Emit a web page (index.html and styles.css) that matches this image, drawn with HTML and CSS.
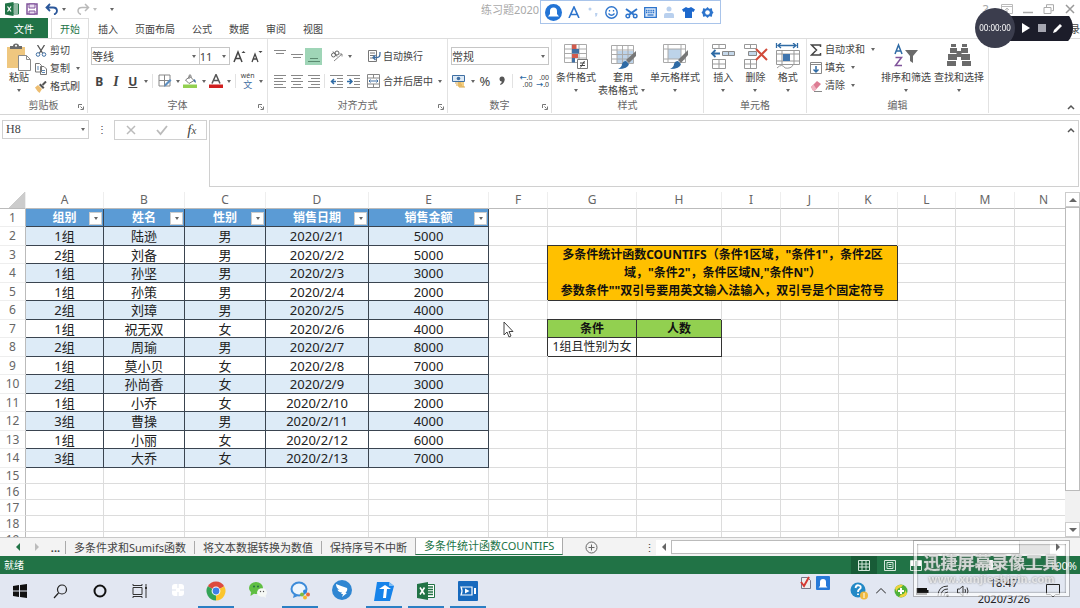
FILE: index.html
```html
<!DOCTYPE html>
<html lang="zh-CN">
<head>
    <meta charset="UTF-8">
    <meta name="viewport" content="width=device-width, initial-scale=1.0">
    <title>练习题2020 - Excel</title>
    <link rel="stylesheet" href="styles.css">
</head>
<body>
    <!-- Title bar -->
    <header class="titlebar">
        <div class="quick">
            <svg width="14" height="14" viewBox="0 0 14 14"><path d="M8 2h5.5v10H8z" fill="#fff" stroke="#217346"/><path d="M9 4h4M9 6h4M9 8h4M9 10h4" stroke="#217346"/><path d="M0 1.500 8.500 0v14L0 12.500z" fill="#217346"/><path d="m2.500 4.500 3.500 5M6 4.500l-3.500 5" stroke="#fff" stroke-width="1.300"/></svg>
            <button aria-label="保存"><svg width="12" height="12" viewBox="0 0 12 12"><path d="M1 1h10v10H1z" fill="#fff" stroke="#80539b" stroke-width="1.500"/><path d="M3 1h6v4H3zM3 8h6v3H3z" fill="#e9def0" stroke="#80539b"/></svg></button>
            <button aria-label="撤销"><svg width="14" height="12" viewBox="0 0 14 12"><path d="M5 1 1.500 4.500 5 8M2 4.500h6q4 0 4 3.500 0 2.500-3 3.500" fill="none" stroke="#2b579a" stroke-width="1.800"/></svg><i class="caret"></i></button>
            <button aria-label="恢复"><svg width="14" height="12" viewBox="0 0 14 12"><path d="m9 1 3.500 3.500L9 8M12 4.500H6Q2 4.500 2 8q0 2.500 3 3.500" fill="none" stroke="#b9b9b9" stroke-width="1.500"/></svg><i class="caret light"></i></button>
            <button aria-label="自定义"><i class="caret"></i></button>
        </div>
        <div class="doc-title">练习题2020</div>
        <div class="window-buttons">
            <button aria-label="帮助">?</button>
            <button aria-label="功能区选项"><svg width="12" height="10" viewBox="0 0 12 10"><path d="M.5.5h11v9H.5zM.5 2.500h11M6 8.500v-4M4 6l2-2 2 2" fill="none" stroke="#bbb"/></svg></button>
            <button aria-label="最小化"><svg width="12" height="10" viewBox="0 0 12 10"><path d="M1 8.500h10" stroke="#aaa" stroke-width="1.500"/></svg></button>
            <button aria-label="还原"><svg width="12" height="10" viewBox="0 0 12 10"><path d="M1 3.500h7v6H1zM3.500 3V.700h7v6H8.500" fill="none" stroke="#aaa"/></svg></button>
            <button aria-label="关闭"><svg width="12" height="10" viewBox="0 0 12 10"><path d="m2 1 8 8M10 1 2 9" stroke="#999" stroke-width="1.500"/></svg></button>
        </div>
    </header>

    <!-- Ribbon tabs -->
    <nav class="tabs">
        <a href="#" class="file">文件</a>
        <a href="#" class="active">开始</a>
        <a href="#">插入</a>
        <a href="#">页面布局</a>
        <a href="#">公式</a>
        <a href="#">数据</a>
        <a href="#">审阅</a>
        <a href="#">视图</a>
        <a href="#" class="login">登录</a>
    </nav>

    <!-- Ribbon -->
    <section class="ribbon">
        <div class="group clipboard">
            <div class="body">
                <button class="big"><svg width="26" height="28" viewBox="0 0 26 28"><path d="M1 4h18v21H1z" fill="#efc77f"/><path d="M4 6V3h3q0-2.500 3-2.500T13 3h3v3z" fill="#6b6b6b"/><circle cx="10" cy="2.700" r="1" fill="#fff"/><path d="M12.500 12.500h8l4 4v11h-12z" fill="#fff" stroke="#8a8a8a"/><path d="M20.500 12.500v4h4" fill="none" stroke="#8a8a8a"/></svg><span>粘贴</span><i class="caret"></i></button>
                <div class="list">
                    <button class="line"><svg width="12" height="12" viewBox="0 0 12 12"><path d="m2.500 0 5 8M9.500 0l-5 8" stroke="#555" stroke-width="1.300"/><circle cx="3" cy="9.500" r="1.800" fill="none" stroke="#3f6fa3"/><circle cx="9" cy="9.500" r="1.800" fill="none" stroke="#3f6fa3"/></svg>剪切</button>
                    <button class="line"><svg width="12" height="12" viewBox="0 0 12 12"><path d="M.5.500h4l2 2V9h-6zM5.500 3.500h3.500l2.500 2.500v5.500h-6z" fill="#fff" stroke="#777"/><path d="M2 4h2M2 6h2M7 7.500h3M7 9.500h3" stroke="#5b87b5"/></svg>复制<i class="caret"></i></button>
                    <button class="line"><svg width="12" height="12" viewBox="0 0 12 12"><path d="M0 6.500 3 4l4 4-2.500 4Q2 10 0 6.500z" fill="#edbd70"/><path d="m4 4 1.500-1.500 4 4L8 8z" fill="#555"/><path d="M7.500 4 11 .500" stroke="#555" stroke-width="2"/></svg>格式刷</button>
                </div>
            </div>
            <div class="label">剪贴板<svg class="launch" width="6" height="6" viewBox="0 0 6 6"><path d="M.5 4V.500H4M2.500 2.500l2 2M5.500 2.500v3h-3" fill="none" stroke="#777"/></svg></div>
        </div>

        <div class="group font">
            <div class="body rows">
                <div class="row">
                    <span class="picker name"><select aria-label="字体"><option>等线</option></select><i class="caret"></i></span>
                    <span class="picker size"><select aria-label="字号"><option>11</option></select><i class="caret"></i></span>
                    <button class="tool grow" aria-label="增大字号"><svg width="13" height="13" viewBox="0 0 13 13"><path d="M1 12 5 2l4 10M2.500 8.500h5" fill="none" stroke="#444" stroke-width="1.500"/><path d="m8.500 3 2-2 2 2z" fill="#444"/></svg></button>
                    <button class="tool" aria-label="减小字号"><svg width="13" height="13" viewBox="0 0 13 13"><path d="m2 12 3-8 3 8M3 9h4" fill="none" stroke="#444" stroke-width="1.300"/><path d="m8.500 1 2 2 2-2z" fill="#444"/></svg></button>
                </div>
                <div class="row">
                    <button class="tool bold">B</button>
                    <button class="tool italic">I</button>
                    <button class="tool underline">U</button><i class="caret"></i>
                    <i class="sep"></i>
                    <button class="tool" aria-label="边框"><svg width="14" height="14" viewBox="0 0 14 14"><path d="M1 1h11v11H1zM6.500 1v11M1 6.500h11" fill="none" stroke="#888"/><path d="m6 13 1-3 5-5 1.500 1.500-5 5z" fill="#5b8dc0"/></svg></button><i class="caret"></i>
                    <button class="tool" aria-label="填充颜色"><svg width="14" height="14" viewBox="0 0 14 14"><path d="M2.500 6 7 2.500l4 4L6 9.500z" fill="#fff" stroke="#777"/><path d="M6 5V1.500q1-1.500 2 0V4" fill="none" stroke="#777"/><path d="M11 5q2.500 1.500 1.500 4L10.500 7z" fill="#3f6fa3"/><path d="M0 10.500h14V14H0z" fill="#92d050"/></svg></button><i class="caret"></i>
                    <button class="tool" aria-label="字体颜色"><svg width="14" height="14" viewBox="0 0 14 14"><path d="m3 9.500 4-9 4 9M4.500 6.500h5" fill="none" stroke="#555" stroke-width="1.500"/><path d="M0 10.500h14V14H0z" fill="#d01f1f"/></svg></button><i class="caret"></i>
                    <i class="sep"></i>
                    <button class="tool wen"><small>wén</small><span>文</span></button><i class="caret"></i>
                </div>
            </div>
            <div class="label">字体<svg class="launch" width="6" height="6" viewBox="0 0 6 6"><path d="M.5 4V.500H4M2.500 2.500l2 2M5.500 2.500v3h-3" fill="none" stroke="#777"/></svg></div>
        </div>

        <div class="group align">
            <div class="body">
                <div class="rows">
                    <div class="row">
                        <button class="tool" aria-label="顶端对齐"><svg width="12" height="14" viewBox="0 0 12 14"><path d="M0 1.500h12M2 4.500h8" stroke="#888"/></svg></button>
                        <button class="tool" aria-label="垂直居中"><svg width="12" height="14" viewBox="0 0 12 14"><path d="M0 5.500h12M2 8.500h8" stroke="#888"/></svg></button>
                        <button class="tool on" aria-label="底端对齐"><svg width="12" height="14" viewBox="0 0 12 14"><path d="M2 9.500h8M0 12.500h12" stroke="#5b8a70"/></svg></button>
                        <i class="sep blank"></i>
                        <button class="tool" aria-label="方向"><svg width="14" height="14" viewBox="0 0 14 14"><circle cx="3.500" cy="6" r="2" fill="none" stroke="#666"/><path d="m3 2.500 4 5" stroke="#666"/><circle cx="7" cy="4" r="2" fill="none" stroke="#666"/><path d="m4 12 8-7M9.500 5H12v2.500" fill="none" stroke="#888"/></svg></button><i class="caret"></i>
                    </div>
                    <div class="row">
                        <button class="tool" aria-label="左对齐"><svg width="12" height="14" viewBox="0 0 12 14"><path d="M0 1.500h12M0 4.500h9M0 7.500h12M0 10.500h9M0 13.500h12" stroke="#888"/></svg></button>
                        <button class="tool" aria-label="居中"><svg width="12" height="14" viewBox="0 0 12 14"><path d="M0 1.500h12M2 4.500h8M0 7.500h12M2 10.500h8M0 13.500h12" stroke="#888"/></svg></button>
                        <button class="tool" aria-label="右对齐"><svg width="12" height="14" viewBox="0 0 12 14"><path d="M0 1.500h12M3 4.500h9M0 7.500h12M3 10.500h9M0 13.500h12" stroke="#888"/></svg></button>
                        <i class="sep"></i>
                        <button class="tool" aria-label="减少缩进"><svg width="13" height="14" viewBox="0 0 13 14"><path d="M0 1.500h13M7 4.500h6M7 7.500h6M7 10.500h6M0 13.500h13" stroke="#888"/><path d="M6 7.500H2M4 5 1.500 7.500 4 10" fill="none" stroke="#2f6ba5" stroke-width="1.500"/></svg></button>
                        <button class="tool" aria-label="增加缩进"><svg width="13" height="14" viewBox="0 0 13 14"><path d="M0 1.500h13M7 4.500h6M7 7.500h6M7 10.500h6M0 13.500h13" stroke="#888"/><path d="M0 7.500h4M2.500 5 5 7.500 2.500 10" fill="none" stroke="#2f6ba5" stroke-width="1.500"/></svg></button>
                    </div>
                </div>
                <div class="rows wrap">
                    <button class="line"><svg width="14" height="14" viewBox="0 0 14 14"><path d="M1.500 1.500h8v11h-8zM3 4h5M3 6.500h4M3 9h4" fill="none" stroke="#777"/><path d="M6 8.500h4q3 0 3-4V3M8.500 6 6 8.500 8.500 11" fill="none" stroke="#3f6fa3" stroke-width="1.300"/></svg>自动换行</button>
                    <button class="line"><svg width="14" height="14" viewBox="0 0 14 14"><path d="M.5.500h12v13H.5zM.5 4h12M.5 10h12M6.500.500V4M6.500 10v3.500" fill="none" stroke="#888"/><path d="M2 7h9M3.500 5.500 2 7l1.500 1.500M9.500 5.500 11 7 9.500 8.500" fill="none" stroke="#3f6fa3"/></svg>合并后居中<i class="caret"></i></button>
                </div>
            </div>
            <div class="label">对齐方式<svg class="launch" width="6" height="6" viewBox="0 0 6 6"><path d="M.5 4V.500H4M2.500 2.500l2 2M5.500 2.500v3h-3" fill="none" stroke="#777"/></svg></div>
        </div>

        <div class="group number">
            <div class="body rows">
                <div class="row">
                    <span class="picker format"><select aria-label="数字格式"><option>常规</option></select><i class="caret"></i></span>
                </div>
                <div class="row">
                    <button class="tool" aria-label="会计数字格式"><svg width="14" height="14" viewBox="0 0 14 14"><path d="M.5 1.500h12v6H.5z" fill="#dce9f5" stroke="#3f6fa3"/><circle cx="6.500" cy="4.500" r="1.800" fill="#3f6fa3"/><path d="M6 8h6v5H6z" fill="#f4cf83"/><path d="M3 9h6M4 11h6M7 13h6" stroke="#d8a64c"/></svg></button><i class="caret"></i>
                    <button class="tool percent">%</button>
                    <button class="tool comma" aria-label="千位分隔"><svg width="8" height="12" viewBox="0 0 8 12"><circle cx="4" cy="4" r="2.500" fill="#555"/><path d="M6.500 4q.5 4-4 6l-.5-1Q4 8 4 5z" fill="#555"/></svg></button>
                    <i class="sep"></i>
                    <button class="tool decimals"><span><b>←</b>.0</span><span>.00</span></button>
                    <button class="tool decimals"><span>.00</span><span><b>→</b>.0</span></button>
                </div>
            </div>
            <div class="label">数字<svg class="launch" width="6" height="6" viewBox="0 0 6 6"><path d="M.5 4V.500H4M2.500 2.500l2 2M5.500 2.500v3h-3" fill="none" stroke="#777"/></svg></div>
        </div>

        <div class="group style">
            <div class="body">
                <button class="big"><svg width="26" height="28" viewBox="0 0 26 28"><path d="M1.500 1.500h22v18h-22zM1.500 6h22M1.500 10.500h22M1.500 15h22M9 1.500v18M16 1.500v18" fill="none" stroke="#aaa"/><path d="M9 1.500h4.500V6H9zM9 11h6v4H9z" fill="#d15a4c"/><path d="M9 6h7v4.500H9zM9 15h3v4.500H9z" fill="#3f6fa3"/><path d="M14.500 16.500h10v9h-10z" fill="#fff" stroke="#777"/><path d="M17 20h5M17 22.500h5M21.500 18l-4 6.500" stroke="#444"/></svg><span>条件格式</span><i class="caret"></i></button>
                <button class="big"><svg width="26" height="28" viewBox="0 0 26 28"><path d="M7 8h16v12H7z" fill="#bdd3e9"/><path d="M1.500 2.500h22v18h-22zM1.500 7h22M1.500 11.500h22M1.500 16h22M7 2.500v18M12.500 2.500v18M18 2.500v18" fill="none" stroke="#aaa"/><path d="M26 8v5l-7 7-3-3z" fill="#777"/><path d="m16 18 3 3q-1 5-11 5 4-2 4-5 1-3 4-3z" fill="#2f6ba5"/></svg><span>套用</span><span class="with-caret">表格格式<i class="caret"></i></span></button>
                <button class="big"><svg width="26" height="28" viewBox="0 0 26 28"><path d="M6 6h13v10H6z" fill="#bdd3e9"/><path d="M1.500 1.500h22v18h-22zM1.500 6h22M1.500 16h22M6 1.500v18M19 1.500v18" fill="none" stroke="#aaa"/><path d="M26 7v5l-7 8-3-3z" fill="#777"/><path d="m16 18 3 3q-1 5-11 5 4-2 4-5 1-3 4-3z" fill="#2f6ba5"/></svg><span>单元格样式</span><i class="caret"></i></button>
            </div>
            <div class="label">样式</div>
        </div>

        <div class="group cells">
            <div class="body">
                <button class="big"><svg width="26" height="28" viewBox="0 0 26 28"><path d="M2.500 1.500h13v4h-13zM9 1.500v4M2.500 16.500h13v9h-13zM9 16.500v9M2.500 21h13" fill="none" stroke="#999"/><path d="M12.500 8.500h12v4h-12zM18.500 8.500v4" fill="#c5d8ea" stroke="#888"/><path d="M10 10.500H2M5.500 7 2 10.500 5.500 14" fill="none" stroke="#2f6ba5" stroke-width="1.800"/></svg><span>插入</span><i class="caret"></i></button>
                <button class="big"><svg width="26" height="28" viewBox="0 0 26 28"><path d="M2.500 1.500h12v4h-12zM8.500 1.500v4M2.500 16.500h12v9h-12zM8.500 16.500v9M2.500 21h12" fill="none" stroke="#999"/><path d="M6.500 8.500h8v4h-8z" fill="#c5d8ea" stroke="#888"/><path d="m14 6 11 11M25 6 14 17" stroke="#d14b3a" stroke-width="2"/></svg><span>删除</span><i class="caret"></i></button>
                <button class="big"><svg width="26" height="28" viewBox="0 0 26 28"><path d="M3 2.500h18M6 0 3 2.500 6 5M18 0l3 2.500L18 5M1.500 0v5M22.500 0v5" fill="none" stroke="#2f6ba5" stroke-width="1.300"/><path d="M1.500 7.500h23v14h-23zM1.500 11h23M1.500 18h23M7 7.500v14M19 7.500v14" fill="none" stroke="#999"/><path d="M8 11h7v7H8z" fill="#3f75ae"/><path d="M2 25q5-5 8 0 6 1 8-3" fill="none" stroke="#999"/></svg><span>格式</span><i class="caret"></i></button>
            </div>
            <div class="label">单元格</div>
        </div>

        <div class="group editing">
            <div class="body">
                <div class="list">
                    <button class="line"><svg width="12" height="12" viewBox="0 0 12 12"><path d="M10.500 3V1h-9l5 5-5 5h9V9" fill="none" stroke="#444" stroke-width="1.500"/></svg>自动求和<i class="caret"></i></button>
                    <button class="line"><svg width="12" height="12" viewBox="0 0 12 12"><path d="M.5.500h11v11H.5zM.5 2.500h11" fill="none" stroke="#888"/><path d="M6 4v6M3.500 7.500 6 10l2.500-2.500" fill="none" stroke="#2f6ba5" stroke-width="1.500"/></svg>填充<i class="caret"></i></button>
                    <button class="line"><svg width="12" height="12" viewBox="0 0 12 12"><path d="m1 7 6-6 4 3-6 6.500H3z" fill="#dd7c93"/><path d="M1 7 3 10.500h2L6.500 9 3.500 4.500z" fill="#f0b5c2"/><path d="M4 11.500h8" stroke="#888"/></svg>清除<i class="caret"></i></button>
                </div>
                <button class="big"><svg width="26" height="28" viewBox="0 0 26 28"><path d="M2 11 5.500 2 9 11M3 8h5" fill="none" stroke="#2f6ba5" stroke-width="1.500"/><path d="M2.500 14.500h6l-6 8h6.500" fill="none" stroke="#80539b" stroke-width="1.500"/><path d="M12 7h13l-5 6v7l-3-2v-5z" fill="#6b6b6b"/></svg><span>排序和筛选</span><i class="caret"></i></button>
                <button class="big"><svg width="26" height="28" viewBox="0 0 26 28"><path d="M5 1h5v3H5zM16 1h5v3h-5zM4 5h7v5H4zM15 5h7v5h-7zM10.500 8h5v6h-5zM2 11h9v6H2zM15 11h9v6h-9zM1 18h9v5H1zM16 18h9v5h-9z" fill="#6b6b6b"/></svg><span>查找和选择</span><i class="caret"></i></button>
            </div>
            <div class="label">编辑</div>
        </div>
        <button class="collapse" aria-label="折叠功能区"><svg width="8" height="6" viewBox="0 0 8 6"><path d="m1 5 3-3 3 3" fill="none" stroke="#555" stroke-width="1.500"/></svg></button>
    </section>

    <!-- Formula bar -->
    <section class="formula">
        <div class="namebox"><input type="text" value="H8" aria-label="名称框"><i class="caret"></i></div>
        <span class="dots">⋮</span>
        <div class="fx">
            <button aria-label="取消"><svg width="12" height="12" viewBox="0 0 12 12"><path d="m2 2 8 8M10 2l-8 8" stroke="#bbb" stroke-width="1.500"/></svg></button>
            <button aria-label="输入"><svg width="12" height="12" viewBox="0 0 12 12"><path d="m1 6 3.500 4L11 2" fill="none" stroke="#bbb" stroke-width="1.800"/></svg></button>
            <button class="fn">f<small>x</small></button>
        </div>
        <div class="editor">
            <textarea aria-label="编辑栏"></textarea>
            <button aria-label="折叠编辑栏"><svg width="8" height="6" viewBox="0 0 8 6"><path d="m1 5 3-3 3 3" fill="none" stroke="#555" stroke-width="1.500"/></svg></button>
        </div>
    </section>

    <!-- Worksheet -->
    <main class="sheet">
        <div class="grid">
            <table>
                <colgroup id="cols"></colgroup>
                <thead><tr id="letters"></tr></thead>
                <tbody id="cells"></tbody>
            </table>
            <svg class="cursor" width="11" height="17" viewBox="0 0 11 17"><path d="M1 1v13l3-3 2 5 2-1-2-4.500h4z" fill="#fff" stroke="#444"/></svg>
        </div>
        <div class="vscroll">
            <button aria-label="向上"><i class="arrow up"></i></button>
            <div class="thumb"></div>
            <button aria-label="向下"><i class="arrow down"></i></button>
        </div>
    </main>

    <!-- Sheet tabs -->
    <nav class="sheets">
        <div class="nav">
            <button aria-label="上一个"><i class="arrow left green"></i></button>
            <button aria-label="下一个"><i class="arrow right faint"></i></button>
            <button class="more">...</button>
        </div>
        <a href="#">多条件求和Sumifs函数</a>
        <a href="#">将文本数据转换为数值</a>
        <a href="#">保持序号不中断</a>
        <a href="#" class="active">多条件统计函数COUNTIFS</a>
        <button class="add" aria-label="新工作表"><svg width="13" height="13" viewBox="0 0 13 13"><circle cx="6.500" cy="6.500" r="5.500" fill="none" stroke="#666"/><path d="M6.500 3.500v6M3.500 6.500h6" stroke="#666"/></svg></button>
        <div class="hscroll">
            <span>⋮</span>
            <button aria-label="向左"><i class="arrow left"></i></button>
            <div class="track"><div class="thumb"></div></div>
            <button aria-label="向右"><i class="arrow right"></i></button>
        </div>
    </nav>

    <!-- Status bar -->
    <footer class="status">
        <span>就绪</span>
        <div class="views">
            <button class="on" aria-label="普通"><svg width="12" height="11" viewBox="0 0 12 11"><path d="M.5.500h11v10H.5zM.5 4h11M.5 7h11M4 .500v10M8 .500v10" fill="none" stroke="#d5e8dc"/></svg></button>
            <button aria-label="页面布局"><svg width="12" height="11" viewBox="0 0 12 11"><path d="M.5.500h11v10H.5zM3 2.500h6v6H3zM4.500 4.500h3M4.500 6.500h3" fill="none" stroke="#d5e8dc"/></svg></button>
            <button aria-label="分页预览"><svg width="12" height="11" viewBox="0 0 12 11"><path d="M.5.500h11v10H.5z" fill="none" stroke="#d5e8dc"/><path d="M1 1h4v5H1zM7 1h4v5H7z" fill="#fff"/></svg></button>
        </div>
        <input type="range" min="10" max="190" value="100" aria-label="缩放">
        <span class="zoom">100%</span>
    </footer>

    <!-- Taskbar -->
    <footer class="taskbar">
        <div class="system">
            <button aria-label="开始"><svg width="14" height="14" viewBox="0 0 14 14"><path d="m0 2 6-1v5.500H0zM7 .900 14 0v6.500H7zM0 7.500h6V13l-6-1zM7 7.500h7V14l-7-1z" fill="#111"/></svg></button>
            <button aria-label="搜索"><svg width="15" height="15" viewBox="0 0 15 15"><circle cx="9" cy="5.500" r="4.500" fill="none" stroke="#222" stroke-width="1.200"/><path d="M5.500 9 1 14" stroke="#222" stroke-width="1.200"/></svg></button>
            <button aria-label="Cortana"><svg width="14" height="14" viewBox="0 0 14 14"><circle cx="7" cy="7" r="5.500" fill="none" stroke="#111" stroke-width="2"/></svg></button>
            <button aria-label="任务视图"><svg width="16" height="14" viewBox="0 0 16 14"><path d="M1 3.500h9v7H1zM1 0v1.500h9V0M1 14v-1.500h9V14M14 0v3M14 6v8" fill="none" stroke="#333"/><path d="M13 3h2v2.500h-2z" fill="#333"/></svg></button>
        </div>
        <div class="apps">
            <button class="small" aria-label="工具"><svg width="14" height="14" viewBox="0 0 14 14"><rect x="1" y="1" width="12" height="12" rx="3" fill="#fff"/><path d="M7 1v4M7 9v4M1 7h4M9 7h4" stroke="#dde3ee"/></svg></button>
            <button class="open" aria-label="Chrome"><svg width="20" height="20" viewBox="0 0 20 20"><path d="M10 10 1.800 5.300A9.400 9.400 0 0 1 18.200 5.300z" fill="#dd4b3e"/><path d="M10 10 18.200 5.300A9.400 9.400 0 0 1 10 19.400z" fill="#fbc52d"/><path d="M10 10v9.400A9.400 9.400 0 0 1 1.800 5.300z" fill="#33a457"/><circle cx="10" cy="10" r="4.400" fill="#fff"/><circle cx="10" cy="10" r="3.400" fill="#3f80e8"/></svg></button>
            <button aria-label="微信"><svg width="20" height="18" viewBox="0 0 20 18"><ellipse cx="8" cy="7" rx="7" ry="6" fill="#5fbe43"/><path d="m3 11-.5 4L7 12z" fill="#5fbe43"/><ellipse cx="14" cy="11.500" rx="5" ry="4.300" fill="#f5f8f5"/><path d="m15 15 3 2-.5-3z" fill="#f5f8f5"/><circle cx="6" cy="5.500" r=".9" fill="#264"/><circle cx="10" cy="5.500" r=".9" fill="#264"/><circle cx="12.500" cy="10.500" r=".7" fill="#555"/><circle cx="15.500" cy="10.500" r=".7" fill="#555"/></svg></button>
            <button class="open" aria-label="企业微信"><svg width="20" height="20" viewBox="0 0 20 20"><ellipse cx="9" cy="8" rx="7.500" ry="6.500" fill="#edf5fd" stroke="#3c8bd9" stroke-width="2"/><path d="m4 13-1 4 5-2z" fill="#3c8bd9"/><circle cx="15" cy="10.500" r="2" fill="#2f88dc"/><circle cx="18" cy="13.500" r="2" fill="#e8683c"/><circle cx="15" cy="16.500" r="2" fill="#f3b72e"/><circle cx="12" cy="13.500" r="2" fill="#7dbb42"/></svg></button>
            <button aria-label="钉钉"><svg width="20" height="20" viewBox="0 0 20 20"><circle cx="10" cy="10" r="10" fill="#2f86d2"/><path d="M4 4q5 2 11 4 1 2-1.500 5H15l-5 4 1-3H9l1-1.500Q6 12 5.500 9.500l2 .3Q4 8 4 4z" fill="#fff"/></svg></button>
            <button class="open" aria-label="腾讯文档"><svg width="20" height="19" viewBox="0 0 20 19"><path d="M3 0h12l5 4-4 15H0z" fill="#1683ea"/><path d="M15 0v4h5z" fill="#7dbcf5"/><path d="m5 7 6-4 6 4h-4l-1 9H9l1-9z" fill="#fff"/></svg></button>
            <button class="open" aria-label="Excel"><svg width="18" height="18" viewBox="0 0 18 18"><path d="M9 2.500h8.500v13H9z" fill="#fff" stroke="#217346"/><path d="M11 5h5M11 7.500h5M11 10h5M11 12.500h5" stroke="#217346" stroke-width="1.500"/><path d="M0 2 11 0v18L0 16z" fill="#217346"/><path d="m3 5.500 4.500 7M7.500 5.500l-4.500 7" stroke="#fff" stroke-width="1.600"/></svg></button>
            <button class="open" aria-label="录像工具"><svg width="20" height="20" viewBox="0 0 20 20"><rect width="20" height="20" rx="1" fill="#1769bd"/><path d="M3 6h11v8H3q2-4 0-8z" fill="#1769bd" stroke="#fff" stroke-width="1.200"/><path d="m7 7.500 4.500 2.500L7 12.500z" fill="#fff"/><path d="M16 7h2v6h-2z" fill="#fff"/></svg></button>
        </div>
        <div class="float-icons">
            <svg width="13" height="14" viewBox="0 0 13 14"><path d="M2.500 1.500h6l3 3v8h-9z" fill="#eee" stroke="#778"/><path d="m2 6 3 4 5-9" fill="none" stroke="#d53a33" stroke-width="2"/></svg>
            <svg width="14" height="14" viewBox="0 0 14 14"><rect width="14" height="14" rx="1" fill="#2779d8"/><path d="M4 10V6q0-3 3-3t3 3v4l1.500 1.500H2.500z" fill="#fff"/></svg>
        </div>
        <div class="tray">
            <svg width="18" height="18" viewBox="0 0 18 18"><circle cx="8" cy="8" r="7.500" fill="#2389c6"/><path d="M5.500 6q.5-3 3-2.700 3 .5 2 3Q8 8 8 10M8 11.500V13" fill="none" stroke="#fff" stroke-width="1.800"/><circle cx="14" cy="13.500" r="4" fill="#eeb941"/><path d="M14 11v5" stroke="#fff"/></svg>
            <svg width="10" height="6" viewBox="0 0 10 6"><path d="m0 5.500 5-5 5 5" fill="none" stroke="#222"/></svg>
            <svg width="14" height="14" viewBox="0 0 14 14"><circle cx="7" cy="7" r="6.500" fill="#4fb13a"/><path d="M1 4q3-4 8-3L7 3.500Q3 3.500 2.500 8zM13 10q-3 4-8 3l2-2.500q4 0 4.500-4.500z" fill="#f0d33c"/><path d="M7 4v6M4 7h6" stroke="#fff" stroke-width="2"/></svg>
            <svg width="13" height="7" viewBox="0 0 13 7"><path d="M0 0h11v7H0zM11 2h1.500v3H11z" fill="#111"/></svg>
            <svg width="12" height="12" viewBox="0 0 12 12"><path d="M1 11q0-10 10-10M4 11q0-7 7-7M7 11q0-4 4-4" fill="none" stroke="#333"/><circle cx="10.500" cy="10.500" r="1.200" fill="#333"/></svg>
            <svg width="13" height="12" viewBox="0 0 13 12"><path d="M.5 4h2L6 1v10L2.500 8h-2zM8 4q1 2 0 4M10 2.500q2 3.500 0 7" fill="none" stroke="#333"/></svg>
            <div class="clock"><span>18:47</span><span>2020/3/26</span></div>
            <svg width="14" height="14" viewBox="0 0 14 14"><path d="M.5.500h13v10h-4L7 13l-2.500-2.500h-4z" fill="none" stroke="#222"/></svg>
        </div>
    </footer>

    <!-- Input method bar -->
    <div class="ime">
        <svg width="17" height="17" viewBox="0 0 17 17"><circle cx="8.500" cy="8.500" r="8.500" fill="#2274d6"/><path d="M5 10V7q0-3.500 3.500-3.500T12 7v3l2 2.500H3z" fill="#fff"/></svg>
        <svg width="12" height="12" viewBox="0 0 12 12"><path d="M1 12 6 1l5 11M3 8.500h6" fill="none" stroke="#2d74cc" stroke-width="1.600"/></svg>
        <svg width="12" height="12" viewBox="0 0 12 12"><circle cx="3" cy="3" r="1.500" fill="#b9d0ee"/><path d="M8 7h2.500q0 3-2 4z" fill="#b9d0ee"/></svg>
        <svg width="13" height="13" viewBox="0 0 13 13"><circle cx="6.500" cy="6.500" r="5.700" fill="none" stroke="#2d74cc" stroke-width="1.400"/><path d="M4.500 4v1.500M8.500 4v1.500M3.500 7.500q3 3.500 6 0" fill="none" stroke="#2d74cc" stroke-width="1.300"/></svg>
        <svg width="13" height="13" viewBox="0 0 13 13"><path d="m1 3 9 6.500M12 3 3 9.500" stroke="#2d74cc" stroke-width="2"/><circle cx="2.800" cy="10" r="1.800" fill="#fff" stroke="#2d74cc" stroke-width="1.400"/><circle cx="10.200" cy="10" r="1.800" fill="#fff" stroke="#2d74cc" stroke-width="1.400"/></svg>
        <svg width="13" height="11" viewBox="0 0 13 11"><path d="M.7.700h11.600v9.600H.7z" fill="#dbe8f8" stroke="#2d74cc" stroke-width="1.300"/><path d="M2 3.500h9M2 5.500h9" stroke="#2d74cc" stroke-width="1.300" stroke-dasharray="1.400 .8"/><path d="M3.500 8h6" stroke="#2d74cc" stroke-width="1.300"/></svg>
        <svg width="12" height="12" viewBox="0 0 12 12"><circle cx="6" cy="3" r="2.500" fill="#b9d0ee"/><path d="M1 12V9q0-2 2-2h6q2 0 2 2v3z" fill="#b9d0ee"/></svg>
        <svg width="13" height="12" viewBox="0 0 13 12"><path d="M4 1q2.500 2 5 0l4 2.500L11.500 6 10 5.500V12H3V5.500L1.500 6 0 3.500z" fill="#1d68cc"/></svg>
        <svg width="13" height="13" viewBox="0 0 13 13"><path d="m6.500 1 1.700 1.800 2.700-.5.4 2.600L12.500 6.500l-1.200 1.600-.4 2.600-2.700-.5L6.500 12l-1.700-1.800-2.700.5-.4-2.600L.5 6.500l1.200-1.600.4-2.600 2.700.5z" fill="#2d74cc"/><circle cx="6.500" cy="6.500" r="2.300" fill="#fff"/></svg>
    </div>

    <!-- Screen recorder widget -->
    <div class="recorder">
        <span class="time">00:00:00</span>
        <button aria-label="播放"><svg width="10" height="10" viewBox="0 0 10 10"><path d="m1 0 8 5-8 5z" fill="#fff"/></svg></button>
        <button aria-label="停止"><svg width="10" height="10" viewBox="0 0 10 10"><path d="M1 1h8v8H1z" fill="#a5a6b0"/></svg></button>
        <button aria-label="画笔"><svg width="10" height="10" viewBox="0 0 10 10"><path d="m0 10 1-3 6-6 2 2-6 6z" fill="#fff"/></svg></button>
    </div>

    <div class="watermark">
        <strong>迅捷屏幕录像工具</strong>
        <span>www.xunjieshipin.com</span>
    </div>

    <script>
        const columns = [
            ['A', 'w78'], ['B', 'w81'], ['C', 'w81'], ['D', 'w103'], ['E', 'w120'], ['F', 'w59'], ['G', 'w89'],
            ['H', 'w85'], ['I', 'w59'], ['J', 'w58'], ['K', 'w59'], ['L', 'w58'], ['M', 'w59'], ['N', 'w58']
        ];
        const headers = ['组别', '姓名', '性别', '销售日期', '销售金额'];
        const sales = [
            ['1组', '陆逊', '男', '2020/2/1', 5000],
            ['2组', '刘备', '男', '2020/2/2', 5000],
            ['1组', '孙坚', '男', '2020/2/3', 3000],
            ['1组', '孙策', '男', '2020/2/4', 2000],
            ['2组', '刘璋', '男', '2020/2/5', 4000],
            ['1组', '祝无双', '女', '2020/2/6', 4000],
            ['2组', '周瑜', '男', '2020/2/7', 8000],
            ['1组', '莫小贝', '女', '2020/2/8', 7000],
            ['2组', '孙尚香', '女', '2020/2/9', 3000],
            ['1组', '小乔', '女', '2020/2/10', 2000],
            ['3组', '曹操', '男', '2020/2/11', 4000],
            ['1组', '小丽', '女', '2020/2/12', 6000],
            ['3组', '大乔', '女', '2020/2/13', 7000]
        ];
        const note = '多条件统计函数COUNTIFS（条件1区域，"条件1"，条件2区<br>域，"条件2"，条件区域N,"条件N"）<br>参数条件""双引号要用英文输入法输入，双引号是个固定符号';

        // Cells outside the sales table, keyed by address
        const extra = {
            G3: `<td class="note" colspan="5" rowspan="3">${note}</td>`,
            G7: '<td class="key">条件</td>',
            H7: '<td class="key">人数</td>',
            G8: '<td class="boxed">1组且性别为女</td>',
            H8: '<td class="boxed"></td>'
        };
        const merged = ['H3', 'I3', 'J3', 'K3', 'G4', 'H4', 'I4', 'J4', 'K4', 'G5', 'H5', 'I5', 'J5', 'K5'];

        document.getElementById('cols').innerHTML = '<col class="w26">' + columns.map(c => `<col class="${c[1]}">`).join('');
        document.getElementById('letters').innerHTML = '<th class="corner"></th>' + columns.map(c => `<th>${c[0]}</th>`).join('');

        let html = '';
        for (let r = 1; r <= 19; r++) {
            html += `<tr class="${r > 14 ? 'short' : ''}"><th>${r}</th>`;
            columns.forEach((c, i) => {
                const address = c[0] + r;
                if (merged.includes(address)) return;
                if (i < 5 && r === 1) {
                    html += `<td class="head">${headers[i]}<button class="filter" aria-label="筛选"><i class="caret"></i></button></td>`;
                } else if (i < 5 && r <= 14) {
                    html += `<td class="data ${r % 2 === 0 ? 'band' : ''}">${sales[r - 2][i]}</td>`;
                } else {
                    html += extra[address] || '<td></td>';
                }
            });
            html += '</tr>';
        }
        document.getElementById('cells').innerHTML = html;
    </script>
</body>
</html>
```
FILE: styles.css
```css
* {
    box-sizing: border-box;
}
body {
    margin: 0;
    height: 100vh;
    display: flex;
    flex-direction: column;
    overflow: hidden;
    background-color: #fff;
    color: #444;
    font-family: "Noto Sans", "Noto Sans CJK SC", sans-serif;
    font-size: 10px;
    line-height: 13px;
}
button, input, select, textarea {
    font: inherit;
    color: inherit;
    background: none;
    border: none;
    padding: 0;
    margin: 0;
}
button {
    display: flex;
    align-items: center;
    justify-content: center;
}
a {
    color: inherit;
    text-decoration: none;
}
svg {
    display: block;
    flex: none;
}
.caret {
    display: inline-block;
    flex: none;
    margin: 0 3px;
    border: 2px solid transparent;
    border-top: 3px solid #666;
    border-bottom: none;
}
.caret.light {
    border-top-color: #bbb;
}
.arrow {
    border: 4px solid transparent;
}
.arrow.up {
    border-top: none;
    border-bottom-color: #666;
}
.arrow.down {
    border-bottom: none;
    border-top-color: #666;
}
.arrow.left {
    border-left: none;
    border-right-color: #666;
}
.arrow.right {
    border-right: none;
    border-left-color: #666;
}
.arrow.green {
    border-right-color: #217346;
}
.arrow.faint {
    border-left-color: #bbb;
}

/* title bar */
.titlebar {
    flex: none;
    height: 18px;
    display: grid;
    grid-template-columns: 1fr auto 1fr;
    align-items: center;
}
.quick {
    display: flex;
    align-items: center;
    gap: 7px;
    padding-left: 5px;
}
.doc-title {
    font-size: 11px;
    color: #aaa;
    padding-right: 60px;
}
.window-buttons {
    display: flex;
    justify-content: flex-end;
}
.window-buttons button {
    width: 21px;
    font-size: 13px;
    color: #aaa;
}

/* ribbon tabs */
.tabs {
    flex: none;
    display: flex;
    gap: 1px;
    height: 20px;
    line-height: 22px;
}
.tabs a {
    padding: 0 8px;
}
.tabs .file {
    padding: 0 14px;
    margin-right: 2px;
    background-color: #217346;
    color: #fff;
}
.tabs .active {
    line-height: 20px;
    color: #217346;
    background-color: #fff;
    border: 1px solid #ddd;
    border-bottom: none;
}
.tabs .login {
    margin-left: auto;
    padding: 0;
}

/* ribbon */
.ribbon {
    flex: none;
    display: flex;
    height: 77px;
    border-top: 1px solid #ddd;
    border-bottom: 1px solid #d5d5d5;
}
.group {
    display: flex;
    flex-direction: column;
    border-right: 1px solid #e2e2e2;
    margin-bottom: 1px;
}
.body {
    flex: 1;
    display: flex;
    padding: 4px 2px 0 3px;
}
.label {
    position: relative;
    height: 15px;
    line-height: 15px;
    text-align: center;
    color: #666;
}
.launch {
    position: absolute;
    right: 3px;
    bottom: 3px;
}
.clipboard {
    width: 88px;
}
.font, .align {
    width: 180px;
}
.number {
    width: 104px;
}
.style {
    width: 152px;
}
.cells {
    width: 103px;
}
.editing {
    width: 182px;
}
.style .body, .cells .body {
    justify-content: space-around;
}
.big {
    flex-direction: column;
    justify-content: flex-start;
    white-space: nowrap;
}
.big > .caret {
    margin-top: 5px;
}
.with-caret {
    display: flex;
    align-items: center;
}
.cells .big, .clipboard .big {
    width: 32px;
}
.list {
    display: flex;
    flex-direction: column;
    gap: 5px;
    padding-top: 1px;
}
.line {
    justify-content: flex-start;
    gap: 3px;
    white-space: nowrap;
}
.editing .body {
    gap: 3px;
}
.editing .list {
    width: 68px;
    padding-top: 0;
}
.rows {
    display: flex;
    flex-direction: column;
    gap: 7px;
}
.body.rows {
    padding-top: 8px;
}
.align .rows {
    padding-top: 4px;
}
.row {
    display: flex;
    align-items: center;
    height: 18px;
}
.tool {
    width: 17px;
    height: 17px;
}
.row .caret {
    width: 4px;
}
.row > .caret {
    margin: 0 2px 0 3px;
}
.sep {
    width: 1px;
    height: 14px;
    margin: 0 3px 0 2px;
    background-color: #e2e2e2;
}
.sep.blank {
    background: none;
}
.tool.on {
    background-color: #9fd5b7;
}
.grow {
    margin-left: 1px;
}
.bold {
    font-size: 12px;
    font-weight: bold;
}
.italic {
    font-family: "Liberation Serif", serif;
    font-size: 14px;
    font-style: italic;
    font-weight: bold;
}
.underline {
    font-size: 12px;
    font-weight: bold;
    text-decoration: underline;
}
.wen {
    flex-direction: column;
    color: #3f6fa3;
    font-size: 9px;
    line-height: 10px;
}
.wen small {
    font-size: 7px;
    line-height: 8px;
    color: #444;
}
.percent {
    font-size: 13px;
}
.decimals {
    flex-direction: column;
    align-items: flex-end;
    font-size: 7px;
    line-height: 7px;
}
.decimals b {
    color: #2f6ba5;
}
.picker {
    display: flex;
    align-items: center;
    height: 18px;
    border: 1px solid #c6c6c6;
}
.picker select {
    appearance: none;
    flex: 1;
    min-width: 0;
    font-size: 11px;
}
.picker.name {
    width: 110px;
}
.picker.size {
    width: 31px;
    border-left: none;
}
.picker.format {
    width: 99px;
}
.wrap .line {
    height: 18px;
    gap: 2px;
}
.wrap {
    margin-left: auto;
    padding-left: 2px;
    width: 80px;
}
.collapse {
    margin: auto 5px 4px auto;
}

/* formula bar */
.formula {
    flex: none;
    display: flex;
    align-items: flex-start;
    height: 77px;
    padding: 5px 1px 5px 2px;
}
.namebox {
    display: flex;
    align-items: center;
    width: 87px;
    height: 19px;
    border: 1px solid #d0d0d0;
}
.namebox input {
    flex: 1;
    min-width: 0;
    padding-left: 3px;
    font-family: "Liberation Serif", serif;
    font-size: 12px;
}
.dots {
    width: 25px;
    line-height: 19px;
    text-align: center;
}
.fx {
    display: flex;
    justify-content: space-around;
    width: 93px;
    height: 20px;
    border: 1px solid #d0d0d0;
}
.fn {
    font-family: "Liberation Serif", serif;
    font-size: 15px;
    font-style: italic;
}
.fn small {
    font-size: 11px;
}
.editor {
    flex: 1;
    display: flex;
    align-items: flex-start;
    height: 67px;
    margin-left: 2px;
    border: 1px solid #d0d0d0;
}
.editor textarea {
    flex: 1;
    height: 60px;
    resize: none;
}
.editor button {
    margin: 6px 3px 0 0;
}

/* worksheet */
.sheet {
    flex: 1;
    min-height: 0;
    display: flex;
}
.grid {
    position: relative;
    flex: 1;
    min-width: 0;
    overflow: hidden;
}
table {
    table-layout: fixed;
    width: 0;
    border-collapse: separate;
    border-spacing: 0;
    color: #222;
    font-size: 13px;
    line-height: 16px;
}
.w26 { width: 26px; }
.w58 { width: 58px; }
.w59 { width: 59px; }
.w78 { width: 78px; }
.w81 { width: 81px; }
.w85 { width: 85px; }
.w89 { width: 89px; }
.w103 { width: 103px; }
.w120 { width: 120px; }
th, td {
    height: 18px;
    padding: 0;
    text-align: center;
    white-space: nowrap;
    border-right: 1px solid #dcdcdc;
    border-bottom: 1px solid #dcdcdc;
}
tbody tr:nth-child(even) > * {
    height: 19px;
}
th {
    font-size: 12px;
    line-height: 14px;
    font-weight: normal;
    color: #666;
}
thead th {
    height: 17px;
    border-right-color: #eee;
    border-bottom-color: #bbb;
}
tbody th {
    border-right-color: #bbb;
    border-bottom-color: #eee;
}
tbody .short > *, tbody .short:nth-child(even) > * {
    height: 16px;
    line-height: 14px;
}
.corner {
    background: linear-gradient(135deg, #fff 60%, #ccc 60%);
}
.head, .data {
    border-color: #3a4450;
}
.head {
    position: relative;
    background-color: #5b9bd5;
    color: #fff;
    font-size: 12px;
    font-weight: bold;
}
.filter {
    position: absolute;
    right: 1px;
    bottom: 1px;
    width: 13px;
    height: 13px;
    background-color: #fff;
    border: 1px solid #ccc;
}
.band {
    background-color: #ddebf7;
}
.note, .key, .boxed {
    position: relative;
    border-color: #333;
    box-shadow: -1px -1px 0 #333;
    font-size: 12px;
}
.note, .key {
    color: #111;
    font-weight: bold;
}
.note {
    line-height: 18px;
    background-color: #ffc000;
}
.key {
    background-color: #92d050;
}
.cursor {
    position: absolute;
    left: 503px;
    top: 129px;
}
.vscroll {
    width: 15px;
    display: flex;
    flex-direction: column;
    background-color: #f1f1f1;
}
.vscroll button {
    height: 15px;
    background-color: #fff;
    border: 1px solid #ccc;
}
.vscroll .thumb {
    height: 284px;
    background-color: #fff;
    border: 1px solid #bbb;
}
.vscroll button:last-child {
    margin-top: auto;
}

/* sheet tabs */
.sheets {
    flex: none;
    display: flex;
    align-items: center;
    height: 19px;
    background-color: #f3f3f3;
    border-top: 1px solid #c8c8c8;
    font-size: 11px;
    white-space: nowrap;
}
.nav {
    display: flex;
    width: 65px;
    padding-left: 8px;
}
.nav button {
    width: 19px;
}
.sheets a {
    padding: 0 8px;
    line-height: 13px;
    border-left: 1px solid #aaa;
}
.sheets .active {
    height: 17px;
    align-self: flex-start;
    line-height: 16px;
    background-color: #fff;
    color: #217346;
    border-right: 1px solid #aaa;
    border-bottom: 1px solid #217346;
}
.add {
    margin-left: 22px;
}
.more {
    font-weight: bold;
}
.hscroll {
    flex: 1;
    display: flex;
    align-items: center;
    height: 15px;
    margin-left: 46px;
    padding-right: 15px;
}
.hscroll button {
    width: 15px;
    height: 15px;
    background-color: #fff;
}
.hscroll span {
    width: 12px;
}
.track {
    flex: 1;
    height: 14px;
    background-color: #e4e4e4;
}
.track .thumb {
    width: 92%;
    height: 14px;
    background-color: #fff;
    border: 1px solid #bbb;
}

/* status bar */
.status {
    flex: none;
    display: flex;
    align-items: center;
    height: 18px;
    padding: 0 3px 0 4px;
    background-color: #217346;
    color: #fff;
}
.views {
    display: flex;
    margin-left: auto;
}
.views button {
    width: 26px;
    height: 18px;
}
.views .on {
    background-color: #185c37;
}
.status input {
    width: 104px;
    height: 12px;
    margin: 0 6px 0 10px;
    appearance: none;
}
.status input::-webkit-slider-runnable-track {
    height: 1px;
    background-color: #a9cdb8;
}
.status input::-webkit-slider-thumb {
    appearance: none;
    width: 4px;
    height: 10px;
    margin-top: -5px;
    background-color: #fff;
}
.zoom {
    font-size: 11px;
}

/* taskbar */
.taskbar {
    position: relative;
    flex: none;
    display: flex;
    height: 34px;
    background-color: #e2e7f2;
    color: #222;
}
.system, .apps {
    display: flex;
}
.system button {
    width: 40px;
}
.apps button {
    width: 42px;
    border: 3px solid transparent;
    border-top: none;
    border-bottom-width: 2px;
}
.apps .small {
    width: 35px;
}
.apps .open {
    background: linear-gradient(#2b7fc4, #2b7fc4) bottom / 100% 2px no-repeat padding-box;
    border-bottom: none;
}
.float-icons {
    display: flex;
    gap: 4px;
    margin-left: auto;
    padding: 2px 20px 0 0;
}
.tray {
    display: flex;
    align-items: center;
    gap: 8px;
    padding-right: 20px;
}
.clock {
    display: flex;
    flex-direction: column;
    align-items: center;
    font-size: 11px;
    line-height: 16px;
    margin-right: 8px;
}

/* floating windows */
.ime {
    position: fixed;
    left: 50%;
    top: 0;
    display: flex;
    align-items: center;
    justify-content: space-between;
    width: 181px;
    height: 24px;
    padding: 0 6px 0 4px;
    background-color: #fff;
    border: 1px solid #a9c4ea;
}
.recorder {
    position: fixed;
    top: 8px;
    right: 7px;
    display: flex;
    align-items: center;
    height: 40px;
    padding-right: 3px;
    background: linear-gradient(#1c1d2a, #1c1d2a) right / 70px 25px no-repeat;
}
.recorder::after {
    content: "";
    width: 4px;
}
.recorder .time {
    width: 40px;
    height: 40px;
    margin-right: 3px;
    border-radius: 50%;
    background-color: #3b3d4d;
    color: #fff;
    font-size: 8px;
    line-height: 40px;
    text-align: center;
}
.recorder button {
    width: 16px;
}
.recorder {
    border-radius: 20px;
}
.watermark {
    position: fixed;
    right: 11px;
    bottom: 12px;
    width: 155px;
    height: 55px;
    padding-top: 9px;
    border: 3px solid rgba(255, 255, 255, 0.7);
    outline: 1px solid rgba(120, 120, 120, 0.5);
    box-shadow: inset 0 0 2px #555;
    color: rgba(255, 255, 255, 0.7);
    text-align: center;
    text-shadow: 0 0 2px #777;
    white-space: nowrap;
}
.watermark strong {
    display: block;
    font-size: 17px;
    line-height: 20px;
}
.watermark span {
    font-family: "DejaVu Sans", sans-serif;
    font-size: 10px;
    font-weight: bold;
}
```
